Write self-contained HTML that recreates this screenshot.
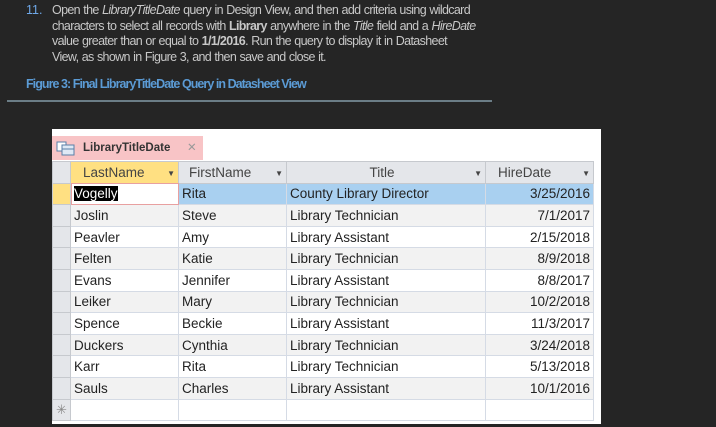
<!DOCTYPE html>
<html><head><meta charset="utf-8"><style>
body{margin:0;width:716px;height:427px;background:#252525;overflow:hidden;position:relative;font-family:"Liberation Sans",sans-serif}
.p{position:absolute;left:52px;top:3px;width:660px;color:#c8c8c8;font-size:12.5px;line-height:15.6px;letter-spacing:-0.65px;word-spacing:0.5px;white-space:nowrap}
.n{position:absolute;left:26px;top:3px;color:#6fa8e8;font-size:12.5px}
.cap{position:absolute;left:26px;top:77px;color:#5b9bd5;font-weight:bold;font-size:12.5px;letter-spacing:-0.95px;white-space:nowrap}
.line{position:absolute;left:7px;top:100px;width:485px;height:2px;background:#6b7d86}
.win{position:absolute;left:52px;top:129px;width:549px;height:295px;background:#fff}
.tab{position:absolute;left:0;top:7px;width:151px;height:24px;background:#f8c4c6;font-size:11.5px;font-weight:bold;color:#333;line-height:24px}
table{position:absolute;left:0;top:32px;border-collapse:collapse;font-size:13.5px;color:#222;table-layout:fixed;width:542px}
td{border:1px solid #d5dbe5;height:20.6px;padding:0 3px;white-space:nowrap;overflow:hidden}
tr.h td{background:#e4e6ea;color:#444;border-color:#c6c9ce}
tr.g td{background:#f2f2f2}
td.s{background:#e4e6ea!important;border-color:#c6c9ce}
td.r{text-align:right}
.dd{float:right;font-size:8px;color:#444;margin-top:4px}
</style></head><body>
<div class="n">11.</div>
<div class="p">Open the <i>LibraryTitleDate</i> query in Design View, and then add criteria using wildcard<br>characters to select all records with <b>Library</b> anywhere in the <i>Title</i> field and a <i>HireDate</i><br>value greater than or equal to <b>1/1/2016</b>. Run the query to display it in Datasheet<br>View, as shown in Figure 3, and then save and close it.</div>
<div class="cap">Figure 3: Final LibraryTitleDate Query in Datasheet View</div>
<div class="line"></div>
<div class="win">
<div class="tab"><svg width="20" height="16" style="position:absolute;left:4px;top:4px"><rect x="1" y="2" width="9" height="9" fill="#fff" stroke="#5a7fa8"/><rect x="6" y="5" width="12" height="10" fill="#dfe9f5" stroke="#5a7fa8"/><line x1="6" y1="9" x2="18" y2="9" stroke="#5a7fa8"/></svg><span style="position:absolute;left:31px">LibraryTitleDate</span><span style="position:absolute;left:135px;font-weight:normal;color:#999">✕</span></div>
<table>
<colgroup><col style="width:18px"><col style="width:108px"><col style="width:108px"><col style="width:199px"><col style="width:108px"></colgroup>
<tr class="h"><td class="s"></td><td style="background:#ffe082;padding-left:12px">LastName<span class="dd">▼</span></td><td style="padding-left:10px">FirstName<span class="dd">▼</span></td><td style="text-align:center">Title<span class="dd">▼</span></td><td style="padding-left:12px">HireDate<span class="dd">▼</span></td></tr>
<tr><td class="s" style="background:#ffe082!important"></td><td style="outline:1px solid #e8a0a0;outline-offset:-1px"><span style="background:#000;color:#fff">Vogelly</span></td><td style="background:#a9d0f0">Rita</td><td style="background:#a9d0f0">County Library Director</td><td class="r" style="background:#a9d0f0">3/25/2016</td></tr>
<tr class="g"><td class="s"></td><td>Joslin</td><td>Steve</td><td>Library Technician</td><td class="r">7/1/2017</td></tr>
<tr><td class="s"></td><td>Peavler</td><td>Amy</td><td>Library Assistant</td><td class="r">2/15/2018</td></tr>
<tr class="g"><td class="s"></td><td>Felten</td><td>Katie</td><td>Library Technician</td><td class="r">8/9/2018</td></tr>
<tr><td class="s"></td><td>Evans</td><td>Jennifer</td><td>Library Assistant</td><td class="r">8/8/2017</td></tr>
<tr class="g"><td class="s"></td><td>Leiker</td><td>Mary</td><td>Library Technician</td><td class="r">10/2/2018</td></tr>
<tr><td class="s"></td><td>Spence</td><td>Beckie</td><td>Library Assistant</td><td class="r">11/3/2017</td></tr>
<tr class="g"><td class="s"></td><td>Duckers</td><td>Cynthia</td><td>Library Technician</td><td class="r">3/24/2018</td></tr>
<tr><td class="s"></td><td>Karr</td><td>Rita</td><td>Library Technician</td><td class="r">5/13/2018</td></tr>
<tr class="g"><td class="s"></td><td>Sauls</td><td>Charles</td><td>Library Assistant</td><td class="r">10/1/2016</td></tr>
<tr><td class="s" style="color:#888;font-size:13px">✳</td><td></td><td></td><td></td><td></td></tr>
</table>
</div>
</body></html>
